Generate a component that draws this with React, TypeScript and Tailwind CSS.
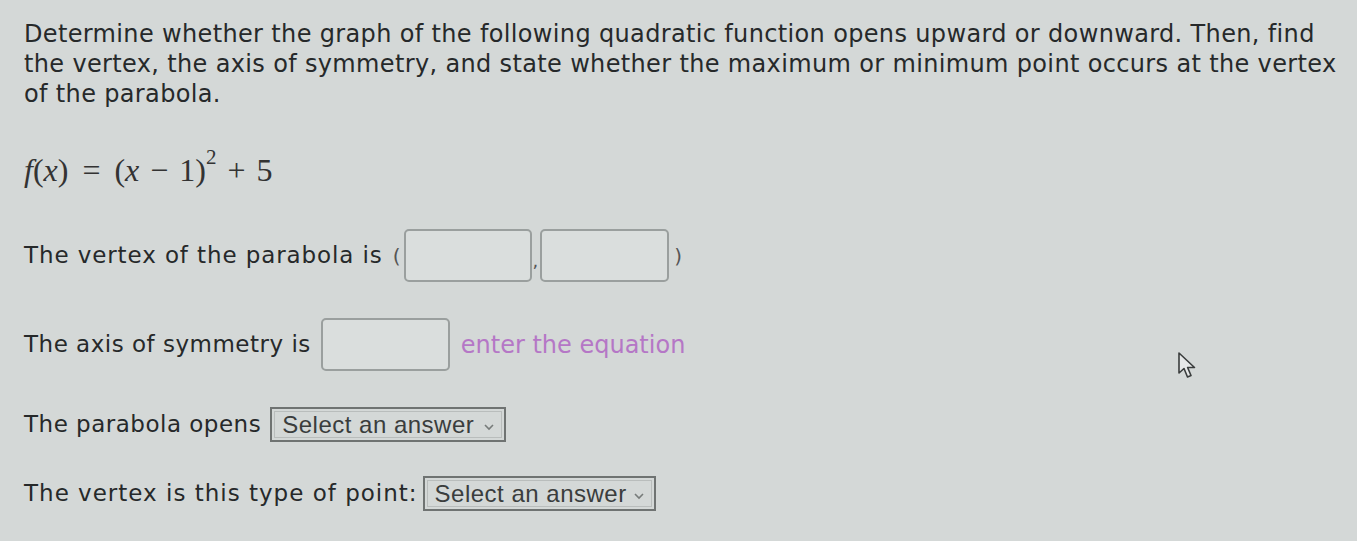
import React from "react";

const Box: React.FC<{ w: string }> = ({ w }) => (
  <span className={`inline-block ${w} h-[53px] rounded-[5px] border-2 border-[#9a9f9e] bg-[#dadedd] align-middle`} />
);

const SelectBox: React.FC<{ w: string }> = ({ w }) => (
  <span className={`inline-flex items-center ${w} h-[35px] border-2 border-[#6f7372] p-[2px] align-middle`}>
    <span className="flex h-full w-full items-center justify-between border border-[#b9bdbc] pl-[7px] pr-[6px]">
      <span className="font-['Liberation_Sans',sans-serif] text-[24px] leading-none tracking-[0.5px] text-[#3a3d3d]">
        Select an answer
      </span>
      <svg width="12" height="10" viewBox="0 0 12 10" className="mt-[4px]">
        <path d="M2 3 L6 7 L10 3" fill="none" stroke="#777b7a" strokeWidth="1.6" />
      </svg>
    </span>
  </span>
);

export default function App() {
  return (
    <div className="relative h-[541px] w-[1357px] overflow-hidden bg-[#d4d8d7] font-['DejaVu_Sans',sans-serif] text-[#26292a]">
      <div className="pl-[24px] pr-[20px] pt-[19px]">
        <p className="whitespace-nowrap text-[24px] leading-[30px] tracking-[0.35px]">
          Determine whether the graph of the following quadratic function opens upward or downward. Then, find
          <br />
          the vertex, the axis of symmetry, and state whether the maximum or minimum point occurs at the vertex
          <br />
          of the parabola.
        </p>

        <div className="mt-[44px] flex h-[34px] items-center font-['Liberation_Serif',serif] text-[32px] leading-none text-[#333]">
          <i>f</i>
          <span>(</span>
          <i>x</i>
          <span>)</span>
          <span className="mx-[14px]">=</span>
          <span>(</span>
          <i>x</i>
          <span className="mx-[11px]">−</span>
          <span>1</span>
          <span>)</span>
          <span className="relative -top-[13px] text-[21px]">2</span>
          <span className="mx-[11px]">+</span>
          <span>5</span>
        </div>

        <div className="mt-[42px] flex items-center text-[23px] tracking-[0.9px]">
          <span>The vertex of the parabola is</span>
          <span className="ml-[10px] text-[20px] text-[#555]">(</span>
          <span className="ml-[3px] flex"><Box w="w-[128px]" /></span>
          <span className="mb-[8px] self-end text-[18px] tracking-[0px] text-[#555]">,</span>
          <span className="ml-[2px] flex"><Box w="w-[129px]" /></span>
          <span className="ml-[5px] text-[20px] text-[#555]">)</span>
        </div>

        <div className="mt-[36px] flex items-center text-[23px] tracking-[0.5px]">
          <span>The axis of symmetry is</span>
          <span className="ml-[10px] flex"><Box w="w-[129px]" /></span>
          <span className="ml-[11px] text-[24px] tracking-[0px] text-[#b577c6]">enter the equation</span>
        </div>

        <div className="mt-[36px] flex items-center text-[23px] tracking-[0.5px]">
          <span>The parabola opens</span>
          <span className="ml-[9px] flex"><SelectBox w="w-[236px]" /></span>
        </div>

        <div className="mt-[34px] flex items-center text-[23px] tracking-[1px]">
          <span>The vertex is this type of point:</span>
          <span className="ml-[5px] flex"><SelectBox w="w-[233px]" /></span>
        </div>
      </div>

      <svg className="absolute left-[1177px] top-[351px]" width="24" height="30" viewBox="0 0 24 30">
        <path
          d="M2 2 L2 22 L7 17.5 L10.5 26 L14 24.5 L10.6 16.5 L17.5 16.5 Z"
          fill="#e6e8e8"
          stroke="#3a3d3d"
          strokeWidth="1.6"
          strokeLinejoin="round"
        />
      </svg>
    </div>
  );
}
